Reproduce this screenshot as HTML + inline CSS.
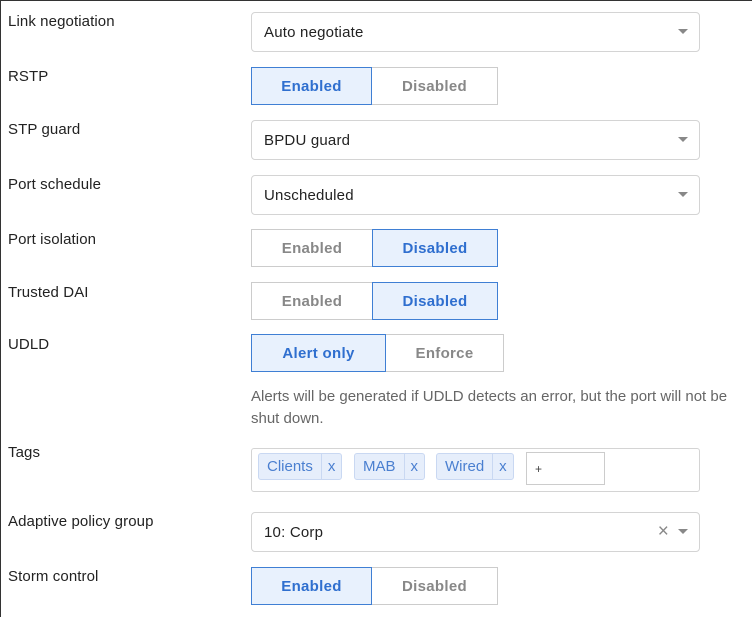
<!DOCTYPE html>
<html><head><style>
*{box-sizing:border-box;margin:0;padding:0}
body{width:752px;height:617px;background:#fff;font-family:"Liberation Sans",sans-serif;position:relative;overflow:hidden}
.frame{position:absolute;left:0;top:0;width:752px;height:617px;border:1px solid #333;border-right:none;border-bottom:none}
.l{position:absolute;left:8px;font-size:15px;color:#222;letter-spacing:0.1px}
.sel{position:absolute;left:251px;width:449px;height:40px;border:1px solid #d4d4d4;border-radius:4px;font-size:15px;color:#222;padding:11px 0 0 12px;letter-spacing:0.2px}
.sel:after{content:"";position:absolute;right:11px;top:16px;border-left:5px solid transparent;border-right:5px solid transparent;border-top:5px solid #888}
.tg{position:absolute;left:251px;height:38px;display:flex;font-size:15px;font-weight:bold;letter-spacing:0.3px}
.tg div{border:1px solid #ccc;display:flex;align-items:center;justify-content:center;color:#888}
.tg div.on{background:#e8f1fd;border-color:#3f7fd4;color:#2f6fcf}
.tag{position:absolute;top:453px;height:27px;background:#e6eefb;border:1px solid #c9d8f2;border-radius:3px;color:#4a7fd0;font-size:15px;display:flex;align-items:center}
.tag span{padding:0 8px}
.tag i{font-style:normal;border-left:1px solid #c9d8f2;height:100%;display:flex;align-items:center;padding:0 6px}
</style></head><body>
<div class="frame"></div>
<div class="l" style="top:13px">Link negotiation</div>
<div class="sel" style="top:12px">Auto negotiate</div>
<div class="l" style="top:68px">RSTP</div>
<div class="tg" style="top:67px"><div class="on" style="width:121px">Enabled</div><div style="width:126px;border-left:none">Disabled</div></div>
<div class="l" style="top:121px">STP guard</div>
<div class="sel" style="top:120px">BPDU guard</div>
<div class="l" style="top:176px">Port schedule</div>
<div class="sel" style="top:175px">Unscheduled</div>
<div class="l" style="top:231px">Port isolation</div>
<div class="tg" style="top:229px"><div style="width:121px;border-right:none">Enabled</div><div class="on" style="width:126px">Disabled</div></div>
<div class="l" style="top:284px">Trusted DAI</div>
<div class="tg" style="top:282px"><div style="width:121px;border-right:none">Enabled</div><div class="on" style="width:126px">Disabled</div></div>
<div class="l" style="top:336px">UDLD</div>
<div class="tg" style="top:334px"><div class="on" style="width:135px">Alert only</div><div style="width:118px;border-left:none">Enforce</div></div>
<div style="position:absolute;left:251px;top:386px;width:504px;font-size:15px;color:#666;line-height:22px">Alerts will be generated if UDLD detects an error, but the port will not be shut down.</div>
<div class="l" style="top:444px">Tags</div>
<div style="position:absolute;left:251px;top:448px;width:449px;height:44px;border:1px solid #d4d4d4;border-radius:3px"></div>
<div class="tag" style="left:258px"><span>Clients</span><i>x</i></div>
<div class="tag" style="left:354px"><span>MAB</span><i>x</i></div>
<div class="tag" style="left:436px"><span>Wired</span><i>x</i></div>
<div style="position:absolute;left:526px;top:452px;width:79px;height:33px;border:1px solid #ccc;font-size:12px;padding:9px 0 0 8px;color:#444">+</div>
<div class="l" style="top:513px">Adaptive policy group</div>
<div class="sel" style="top:512px">10: Corp<span style="position:absolute;right:30px;top:8px;color:#888;font-size:19px">×</span></div>
<div class="l" style="top:568px">Storm control</div>
<div class="tg" style="top:567px"><div class="on" style="width:121px">Enabled</div><div style="width:126px;border-left:none">Disabled</div></div>
</body></html>
